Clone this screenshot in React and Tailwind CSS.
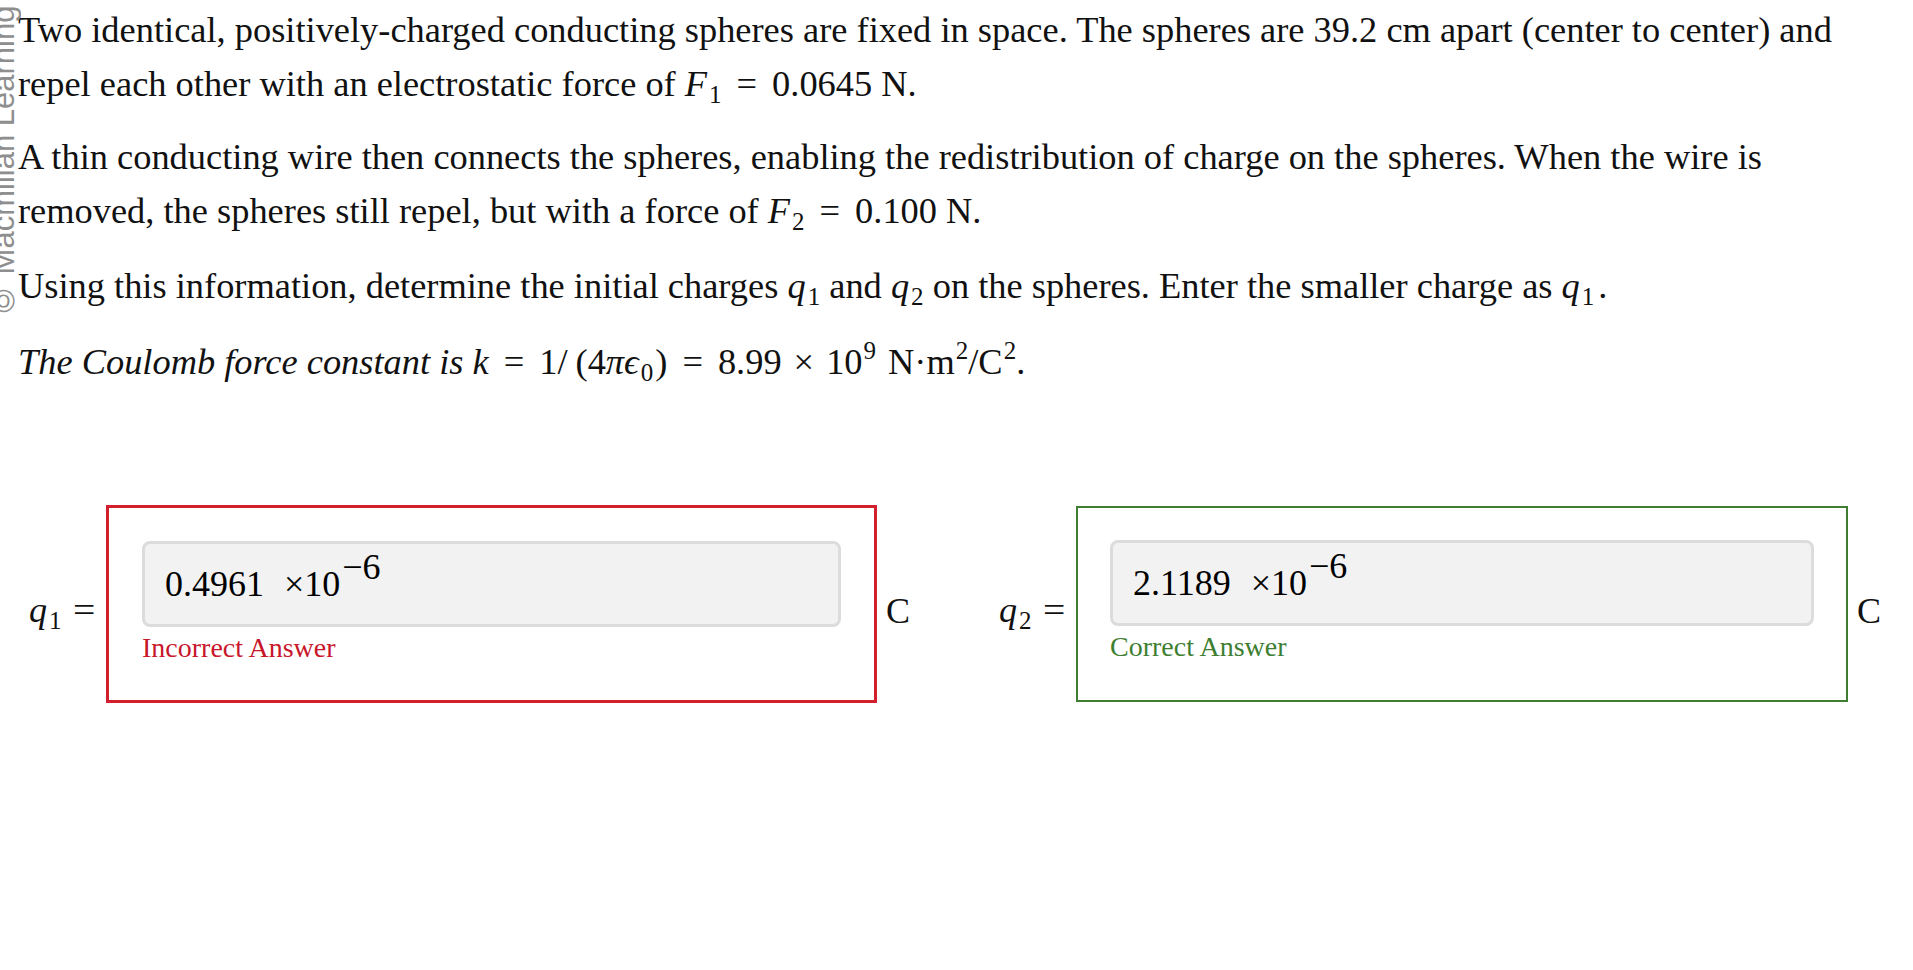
const SERIF = "font-['Liberation_Serif','Times_New_Roman',serif]"

function Sub({ children }) {
  return <span className="ml-[2px] text-[25px] leading-none not-italic align-[-7px]">{children}</span>
}

function Sup({ children }) {
  return <span className="ml-[1px] text-[25px] leading-none not-italic align-[15px]">{children}</span>
}

function Eq() {
  return <span className="mx-[15px] not-italic">=</span>
}

function V({ name, sub }) {
  return (
    <span className="whitespace-nowrap">
      <i>{name}</i>
      {sub && <Sub>{sub}</Sub>}
    </span>
  )
}

function AnswerBox({ label, value, correct }) {
  const box = correct
    ? 'w-[772px] h-[196px] border-2 border-[#3e7e30] p-[32px]'
    : 'w-[771px] h-[198px] border-[3px] border-[#d11f2d] p-[33px]'
  return (
    <div className="flex items-center">
      <div className="w-[88px] pl-[11px] pt-[12px] text-[36px] leading-[54px] whitespace-nowrap">
        <V name="q" sub={label} />
        <span className="ml-[12px] inline-block scale-x-110">=</span>
      </div>
      <div className={`shrink-0 ${box}`}>
        <div className="h-[86px] rounded-[8px] border-[3px] border-[#dcdcdc] bg-[#f2f2f2] pl-[20px] text-[36px] leading-[80px] text-black">
          {value}
          <span className="ml-[20px]">×10</span>
          <span className="ml-[2px] leading-none align-[17px]">−6</span>
        </div>
        <div
          className={`mt-[4px] text-[28px] leading-[34px] ${
            correct ? 'text-[#3e7e30]' : 'text-[#c8162a]'
          }`}
        >
          {correct ? 'Correct Answer' : 'Incorrect Answer'}
        </div>
      </div>
      <div className="ml-[9px] pt-[14px] text-[36px] leading-[54px]">C</div>
    </div>
  )
}

export default function App() {
  return (
    <div className={`relative min-h-[970px] bg-white text-[#111] ${SERIF}`}>
      {/* rotated copyright strip, mostly off the left edge */}
      <div className="absolute left-[-12px] top-[8px] h-[310px] rotate-180 [writing-mode:vertical-rl] font-['Liberation_Sans',Arial,sans-serif] text-[31px] leading-none text-[#8e8e8e] whitespace-nowrap">
        © Macmillan Learning
      </div>

      <div className="pl-[18px] pr-[40px] pt-[3px] text-[36.4px] leading-[54px]">
        <p>
          Two identical, positively-charged conducting spheres are fixed in space. The spheres are
          39.2 cm apart (center to center) and repel each other with an electrostatic force of{' '}
          <V name="F" sub="1" />
          <Eq />
          0.0645 N.
        </p>
        <p className="mt-[19px]">
          A thin conducting wire then connects the spheres, enabling the redistribution of charge on
          the spheres. When the wire is removed, the spheres still repel, but with a force of{' '}
          <V name="F" sub="2" />
          <Eq />
          0.100 N.
        </p>
        <p className="mt-[21px]">
          Using this information, determine the initial charges <V name="q" sub="1" /> and{' '}
          <V name="q" sub="2" /> on the spheres. Enter the smaller charge as{' '}
          <V name="q" sub="1" />
          <span className="ml-[4px]">.</span>
        </p>
        <p className="mt-[22px] italic">
          The Coulomb force constant is k
          <Eq />
          <span className="not-italic">
            1/
            <span className="ml-[8px]">(4</span>
            <i>π</i>
            <i>ϵ</i>
            <Sub>0</Sub>
            <span className="ml-[2px]">)</span>
          </span>
          <Eq />
          <span className="not-italic">
            8.99
            <span className="mx-[12px]">×</span>
            10
            <Sup>9</Sup>
            <span className="ml-[12px]">N·m</span>
            <Sup>2</Sup>/C<Sup>2</Sup>.
          </span>
        </p>

        <div className="mt-[116px] flex">
          <div className="w-[970px] shrink-0">
            <AnswerBox label="1" value="0.4961" correct={false} />
          </div>
          <AnswerBox label="2" value="2.1189" correct />
        </div>
      </div>
    </div>
  )
}
